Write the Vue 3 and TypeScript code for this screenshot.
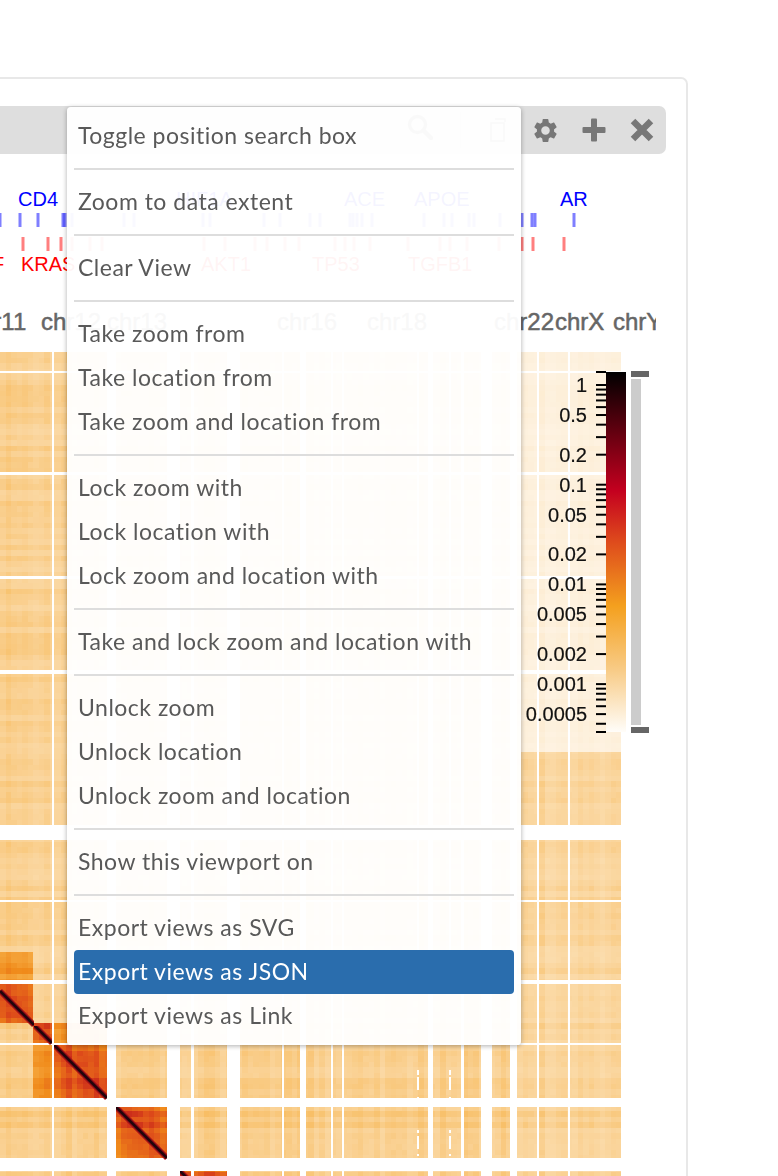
<script setup lang="ts">
import { onMounted, ref } from 'vue'

interface Gene { name: string; x: number; y: number; color: string }
interface Tick { y: number; label?: string }

const menuGroups: string[][] = [
  ['Toggle position search box'],
  ['Zoom to data extent'],
  ['Clear View'],
  ['Take zoom from', 'Take location from', 'Take zoom and location from'],
  ['Lock zoom with', 'Lock location with', 'Lock zoom and location with'],
  ['Take and lock zoom and location with'],
  ['Unlock zoom', 'Unlock location', 'Unlock zoom and location'],
  ['Show this viewport on'],
  ['Export views as SVG', 'Export views as JSON', 'Export views as Link'],
]

const genes: Gene[] = [
  { name: 'CD4', x: 18, y: 206, color: '#0000ff' },
  { name: 'HIF1A', x: 176, y: 206, color: '#0000ff' },
  { name: 'ACE', x: 344, y: 206, color: '#0000ff' },
  { name: 'APOE', x: 414, y: 206, color: '#0000ff' },
  { name: 'AR', x: 560, y: 206, color: '#0000ff' },
  { name: 'BRAF', x: -49, y: 271, color: '#ff0000' },
  { name: 'KRAS', x: 21, y: 271, color: '#ff0000' },
  { name: 'AKT1', x: 201, y: 271, color: '#ff0000' },
  { name: 'TP53', x: 312, y: 271, color: '#ff0000' },
  { name: 'TGFB1', x: 408, y: 271, color: '#ff0000' },
]
const blueTicks = [0, 20, 38, 63, 65, 72, 124, 134, 203, 210, 264, 280, 310, 320, 350, 353, 357, 362, 372, 424, 444, 452, 469, 474, 500, 522, 532, 535, 574]
const redTicks = [23, 48, 61, 72, 90, 102, 204, 225, 255, 267, 285, 299, 335, 345, 354, 370, 408, 440, 450, 467, 499, 522, 533, 564]
const chroms = [
  { name: 'chr11', x: -32 },
  { name: 'chr12', x: 41 },
  { name: 'chr13', x: 107 },
  { name: 'chr16', x: 277 },
  { name: 'chr18', x: 367 },
  { name: 'chr22', x: 494 },
  { name: 'chrX', x: 555 },
  { name: 'chrY', x: 613 },
]

// Colour bar ticks: log scale, 99.7px per decade, "1" at y=33 in the bar's own box
const tickY = (v: number): number => 33 - Math.log10(v) * 99.7
const labelled: Record<string, string> = {
  '0.5': '0.5', '0.2': '0.2', '0.1': '0.1', '0.05': '0.05', '0.02': '0.02',
  '0.01': '0.01', '0.005': '0.005', '0.002': '0.002', '0.001': '0.001', '0.0005': '0.0005',
}
const barTicks: Tick[] = [{ y: 20 }, { y: 380 }, { y: tickY(1), label: '1' }]
for (let d = 0; d > -4; d--) {
  for (let m = 9; m >= 1; m--) {
    const v = Number((m * Math.pow(10, d - 1)).toFixed(6))
    const y = tickY(v)
    if (y <= 376) barTicks.push({ y, label: labelled[String(v)] })
  }
}

const canvas = ref<HTMLCanvasElement | null>(null)

const cols: [number, number][] = [[0, 52], [54, 107], [116, 167], [180, 191], [194, 227], [240, 282], [284, 300], [306, 331], [333, 342], [344, 428], [433, 461], [464, 481], [492, 510], [517, 537], [539, 568], [570, 621]]
const rows: [number, number][] = [[0, 19], [21, 120], [123, 224], [227, 318], [322, 473], [488, 548], [550, 628], [632, 691], [693, 746], [755, 806], [819, 824]]
const OFFSET = 639 // a pixel on the main diagonal has y = x + OFFSET inside the canvas

const stops: [number, number, number, number][] = [
  [0, 253, 234, 203], [0.25, 250, 212, 154], [0.45, 247, 181, 79], [0.6, 240, 138, 26],
  [0.75, 221, 74, 26], [0.88, 176, 0, 26], [1, 10, 0, 0],
]
function colour(t: number): string {
  const v = Math.max(0, Math.min(1, t))
  for (let i = 1; i < stops.length; i++) {
    if (v <= stops[i][0]) {
      const a = stops[i - 1]
      const b = stops[i]
      const f = (v - a[0]) / (b[0] - a[0])
      return `rgb(${Math.round(a[1] + (b[1] - a[1]) * f)},${Math.round(a[2] + (b[2] - a[2]) * f)},${Math.round(a[3] + (b[3] - a[3]) * f)})`
    }
  }
  return 'rgb(10,0,0)'
}

let seed = 20240611
function rnd(): number {
  seed = (seed * 1664525 + 1013904223) >>> 0
  return seed / 4294967296
}

function baseLevel(x0: number, y0: number): number {
  let t = 0.27
  if (y0 === 755) t = 0.3
  if (x0 >= 517) t -= 0.035
  return t
}

function specialLevel(x: number, y: number): number | null {
  const d = Math.abs(y - OFFSET - x)
  const inside = (lo: number, hi: number, tLo: number, tHi: number): boolean =>
    x >= lo && x < hi && y >= tLo && y < tHi
  if (inside(0, 34, 632, 674) || inside(34, 52, 674, 691) || inside(54, 107, 693, 746) || inside(116, 167, 755, 806) || inside(180, 191, 819, 824)) {
    return 0.74 - Math.min(d / 70, 1) * 0.14
  }
  if (inside(0, 34, 601, 628)) return 0.55
  if (inside(34, 52, 693, 746)) return 0.57
  if (inside(54, 107, 674, 691)) return 0.58
  if (inside(194, 227, 819, 824)) return 0.68
  return null
}

onMounted(() => {
  const el = canvas.value
  const ctx = el?.getContext('2d')
  if (!el || !ctx) return
  const S = 5.5
  const colN = Array.from({ length: 130 }, () => rnd() - 0.5)
  const rowN = Array.from({ length: 160 }, () => rnd() - 0.5)
  for (const [y0, y1] of rows) {
    for (const [x0, x1] of cols) {
      const base = baseLevel(x0, y0)
      for (let py = Math.floor(y0 / S); py * S < y1; py++) {
        for (let px = Math.floor(x0 / S); px * S < x1; px++) {
          const ax = Math.max(x0, Math.round(px * S))
          const bx = Math.min(x1, Math.round((px + 1) * S))
          const ay = Math.max(y0, Math.round(py * S))
          const by = Math.min(y1, Math.round((py + 1) * S))
          if (bx <= ax || by <= ay) continue
          const plaid = colN[px] * 0.085 + rowN[py] * 0.085 + (rnd() - 0.5) * 0.025
          const special = specialLevel((ax + bx) / 2, (ay + by) / 2)
          ctx.fillStyle = colour(special !== null ? special + plaid * 1.1 : base + plaid)
          ctx.fillRect(ax, ay, bx - ax, by - ay)
        }
      }
    }
  }
  // Chromosome boundaries that are only partly visible in the low rows
  ctx.fillStyle = '#fff'
  for (const x of [417, 449]) {
    ctx.fillRect(x, 0, 2, 628)
    for (const [a, b] of [[718, 723], [725, 738], [745, 746], [778, 781], [784, 797], [802, 804]]) {
      ctx.fillRect(x, a, 2, b - a)
    }
  }
  // Main diagonal, drawn over the blocks
  const segs: [number, number, number][] = [[0, 34, 632], [34, 52, 674], [54, 107, 693], [116, 167, 755], [180, 191, 819]]
  for (const [a, b, top] of segs) {
    ctx.save()
    ctx.beginPath()
    ctx.rect(a, top, b - a, 200)
    ctx.clip()
    for (const [w, c] of [[5.5, '#a01018'], [2.8, '#22040c']] as [number, string][]) {
      ctx.strokeStyle = c
      ctx.lineWidth = w
      ctx.beginPath()
      ctx.moveTo(a, a + OFFSET)
      ctx.lineTo(b, b + OFFSET)
      ctx.stroke()
    }
    ctx.restore()
  }
})
</script>

<template>
  <div class="page">
    <section class="card">
      <header class="toolbar">
        <svg class="tool search" viewBox="0 0 26 26" width="26" height="26">
          <circle cx="10.5" cy="10.5" r="8" fill="none" stroke="#777" stroke-width="3.4" />
          <path d="M16.5 16.5 24 24" stroke="#777" stroke-width="4.4" stroke-linecap="round" />
        </svg>
        <span class="divider"></span>
        <svg class="tool copy" viewBox="0 0 24 24" width="24" height="24">
          <path d="M8 1h10v3M4 5h13v18H4z" fill="none" stroke="#777" stroke-width="1.6" />
        </svg>
        <svg class="tool" viewBox="1.5 1.5 21 21" width="25" height="25">
          <path fill="#777" d="M19.14 12.94c.04-.3.06-.61.06-.94 0-.32-.02-.64-.07-.94l2.03-1.58a.49.49 0 0 0 .12-.61l-1.92-3.32a.488.488 0 0 0-.59-.22l-2.39.96c-.5-.38-1.03-.7-1.62-.94l-.36-2.54a.484.484 0 0 0-.48-.41h-3.84c-.24 0-.43.17-.47.41l-.36 2.54c-.59.24-1.13.57-1.62.94l-2.39-.96c-.22-.08-.47 0-.59.22L2.74 8.87c-.12.21-.08.47.12.61l2.03 1.58c-.05.3-.09.63-.09.94s.02.64.07.94l-2.03 1.58a.49.49 0 0 0-.12.61l1.92 3.32c.12.22.37.29.59.22l2.39-.96c.5.38 1.03.7 1.62.94l.36 2.54c.05.24.24.41.48.41h3.84c.24 0 .44-.17.47-.41l.36-2.54c.59-.24 1.13-.56 1.62-.94l2.39.96c.22.08.47 0 .59-.22l1.92-3.32c.12-.22.07-.47-.12-.61l-2.01-1.58zM12 15.6c-1.98 0-3.6-1.62-3.6-3.6s1.62-3.6 3.6-3.6 3.6 1.62 3.6 3.6-1.62 3.6-3.6 3.6z" />
        </svg>
        <svg class="tool" viewBox="0 0 24 24" width="24" height="24">
          <rect x="9" y="0.500" width="6" height="23" rx="1" fill="#777" />
          <rect x="0.500" y="9" width="23" height="6" rx="1" fill="#777" />
        </svg>
        <svg class="tool" viewBox="0 0 24 24" width="24" height="24">
          <path d="M3 3l18 18M21 3 3 21" stroke="#777" stroke-width="6.400" />
        </svg>
      </header>

      <svg class="tracks" viewBox="0 154 656 198" width="656" height="198">
        <text v-for="g in genes" :key="g.name" class="gene" :x="g.x" :y="g.y" :fill="g.color">{{ g.name }}</text>
        <rect v-for="(x, i) in blueTicks" :key="'b' + i" :x="x - 1.5" y="213" width="3" height="14" fill="#0000ff" opacity="0.5" />
        <rect v-for="(x, i) in redTicks" :key="'r' + i" :x="x - 1.500" y="237" width="3" height="14" fill="#ff0000" opacity="0.5" />
        <text v-for="c in chroms" :key="c.name" class="chrom" :x="c.x" y="330">{{ c.name }}</text>
      </svg>

      <div class="heat">
        <canvas ref="canvas" width="621" height="824"></canvas>
        <div class="scale-bg"></div>
        <svg class="colorbar" viewBox="0 0 135 400" width="135" height="400">
          <defs>
            <linearGradient id="heat-grad" x1="0" y1="0" x2="0" y2="1">
              <stop offset="0" stop-color="#000000" />
              <stop offset="0.33" stop-color="#c4001f" />
              <stop offset="0.47" stop-color="#de4a1c" />
              <stop offset="0.65" stop-color="#f4a01e" />
              <stop offset="0.83" stop-color="#f8cc88" />
              <stop offset="1" stop-color="#fffdf9" />
            </linearGradient>
          </defs>
          <rect x="85" y="20" width="20" height="360" fill="url(#heat-grad)" />
          <g v-for="(t, i) in barTicks" :key="i">
            <rect x="75" :y="t.y - 1" width="10" height="2" fill="#000" />
            <text v-if="t.label" class="bar-label" x="66" :y="t.y + 7">{{ t.label }}</text>
          </g>
          <rect x="110" y="27" width="10" height="346" fill="#cccccc" />
          <rect x="110" y="19" width="18" height="6" fill="#666666" />
          <rect x="110" y="375" width="18" height="6" fill="#666666" />
        </svg>
      </div>
    </section>

    <nav class="menu">
      <template v-for="(group, g) in menuGroups" :key="g">
        <hr v-if="g > 0" class="sep" />
        <div
          v-for="item in group"
          :key="item"
          class="item"
          :class="{ active: item === 'Export views as JSON' }"
        >{{ item }}</div>
      </template>
    </nav>
  </div>
</template>

<style scoped>
.page {
  position: relative;
  width: 778px;
  height: 1176px;
  overflow: hidden;
  background: #fff;
}
.card {
  box-sizing: border-box;
  width: 708px;
  height: 1200px;
  margin: 0 0 0 -20px;
  position: relative;
  top: 77px;
  padding: 27px 20px 0 18px;
  border: 2px solid #e8e8e8;
  border-radius: 7px;
}
.toolbar {
  display: flex;
  align-items: center;
  justify-content: flex-end;
  gap: 24px;
  height: 48px;
  padding-right: 12px;
  background: #dedede;
  border-radius: 0 7px 7px 0;
}
.tool {
  flex: none;
  display: block;
}
.search {
  margin-right: 3px;
  margin-top: -6px;
}
.copy {
  position: relative;
  left: 2px;
}
.divider {
  width: 1px;
  height: 36px;
  background: #c8c8c8;
}
.tracks {
  display: block;
}
.gene {
  font-family: "Liberation Sans", Arial, sans-serif;
  font-size: 20px;
}
.chrom {
  font-family: "Liberation Sans", Arial, sans-serif;
  font-size: 24px;
  fill: #666;
  stroke: #666;
  stroke-width: 0.5px;
}
.heat {
  position: relative;
  width: 656px;
  height: 824px;
}
.heat canvas {
  display: block;
}
.scale-bg {
  position: absolute;
  left: 521px;
  top: 0;
  width: 100px;
  height: 400px;
  background: rgba(255, 255, 255, 0.65);
}
.colorbar {
  position: absolute;
  left: 521px;
  top: 0;
}
.bar-label {
  font-family: "Liberation Sans", Arial, sans-serif;
  font-size: 20px;
  text-anchor: end;
  fill: #111;
  stroke: #111;
  stroke-width: 0.2px;
}
.menu {
  position: absolute;
  left: 67px;
  top: 107px;
  box-sizing: border-box;
  width: 454px;
  padding: 7px;
  background: rgba(255, 255, 255, 0.955);
  border-radius: 4px;
  box-shadow: 0 1px 5px rgba(0, 0, 0, 0.32);
}
.item {
  height: 44px;
  padding-left: 4px;
  line-height: 42px;
  border-radius: 4px;
  font-family: Lato, "Noto Sans", sans-serif;
  font-size: 23px;
  letter-spacing: 0.5px;
  color: #595959;
  white-space: nowrap;
}
.item.active {
  background: #2a6dad;
  color: #fff;
}
.sep {
  height: 2px;
  margin: 10px 0;
  border: 0;
  background: #dddddd;
}
</style>
